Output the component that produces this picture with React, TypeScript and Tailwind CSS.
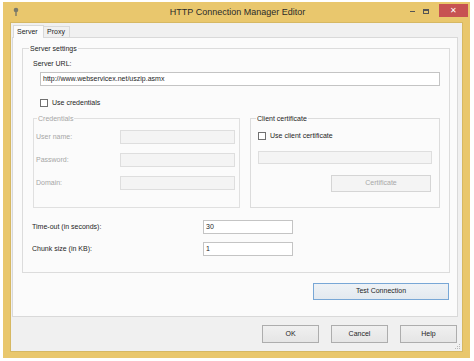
import type { FC } from "react";

const font = "font-['Liberation_Sans',Arial,sans-serif]";

const Checkbox: FC<{ label: string }> = ({ label }) => (
    <div className="flex items-center gap-[4px] h-[9px]">
        <div className="w-[8px] h-[8px] border border-[#707070] bg-white" />
        <span className="text-[7px] leading-[9px] text-[#1e1e1e]">{label}</span>
    </div>
);

const Btn: FC<{ label: string; w: string; disabled?: boolean; def?: boolean }> = ({ label, w, disabled, def }) => {
    let cls = "border-[#adadad] bg-[linear-gradient(#f0f0f0,#e5e5e5)] text-[#1e1e1e]";
    if (disabled) cls = "border-[#d5d5d5] bg-[#f4f4f4] text-[#a8a8a8]";
    if (def) cls = "border-[#78a7d6] bg-[linear-gradient(#eef2f6,#e3e9ef)] text-[#1e1e1e]";
    return (
        <div className={`${w} h-full border flex items-center justify-center text-[7px] ${cls}`}>
            {label}
        </div>
    );
};

const CredRow: FC<{ label: string }> = ({ label }) => (
    <div className="flex items-center ml-[2px]">
        <span className="w-[84px] text-[7px] text-[#a6a6a6]">{label}</span>
        <div className="w-[115px] h-[14px] border border-[#dedede] bg-[#f4f4f4]" />
    </div>
);

const App: FC = () => {
    return (
        <div className={`w-[474px] h-[361px] bg-white pt-[2px] pl-[3px] ${font}`}>
            <div className="w-[467px] h-[356px] bg-[#e9c76d] flex flex-col">

                {/* TITLE BAR */}
                <div className="h-[20px] flex items-start relative">
                    <svg className="absolute left-[10px] top-[5px]" width="6" height="10" viewBox="0 0 6 10">
                        <circle cx="3" cy="3" r="2.3" fill="#7a7a6a" />
                        <rect x="2.3" y="5" width="1.4" height="4" fill="#7a7a6a" />
                    </svg>
                    <div className="flex-1 text-center text-[9px] leading-[20px] text-[#2b2b2b] pl-[2px]">
                        HTTP Connection Manager Editor
                    </div>
                    <div className="absolute right-[2px] top-0 flex items-start">
                        <div className="w-[14px] h-[14px] flex items-center justify-center mt-[2px]">
                            <div className="w-[5px] h-[1px] bg-[#555]" />
                        </div>
                        <div className="w-[14px] h-[14px] flex items-center justify-center mt-[2px] mr-[6px]">
                            <div className="w-[6px] h-[5px] border border-[#555] border-t-2" />
                        </div>
                        <div className="w-[29px] h-[13px] mt-[2px] bg-[#c75252] flex items-center justify-center text-white text-[8px] leading-none">
                            ✕
                        </div>
                    </div>
                </div>

                {/* CLIENT AREA */}
                <div className="mx-[7px] h-[330px] bg-[#f0f0f0] border border-[#d6b863] pl-[1px] pt-[1px] relative">

                    {/* TABS */}
                    <div className="flex items-end h-[13px] ml-[1px] text-[7px] text-[#1e1e1e]">
                        <div className="w-[31px] h-[13px] bg-[#fbfbfb] border border-b-0 border-[#d9d9d9] flex items-center pl-[3px] relative top-[1px] z-10">
                            Server
                        </div>
                        <div className="w-[26px] h-[11px] bg-[#f0f0f0] border border-l-0 border-b-0 border-[#d9d9d9] flex items-center pl-[3px]">
                            Proxy
                        </div>
                    </div>

                    {/* PANEL */}
                    <div className="w-[446px] h-[280px] border border-[#d9d9d9] bg-[#fbfbfb] flex flex-col">

                        <fieldset className="ml-[9px] mt-[6px] w-[428px] border border-[#dcdcdc] flex flex-col pb-[16px]">
                            <legend className="ml-[6px] px-[1px] text-[7px] leading-[9px] text-[#1e1e1e]">Server settings</legend>

                            <div className="ml-[10px] mt-[6px] text-[7px] leading-[9px] text-[#1e1e1e]">Server URL:</div>
                            <div className="ml-[17px] mt-[4px] w-[400px] h-[14px] border border-[#c4c4c4] bg-white flex items-center pl-[2px] text-[7px] text-[#1e1e1e]">
                                http://www.webservicex.net/uszip.asmx
                            </div>

                            <div className="ml-[17px] mt-[12px]">
                                <Checkbox label="Use credentials" />
                            </div>

                            <div className="flex ml-[10px] mt-[7px] gap-[10px]">
                                <fieldset className="w-[207px] h-[94px] border border-[#e0e0e0] flex flex-col gap-[9px]">
                                    <legend className="ml-[3px] px-[1px] text-[7px] leading-[9px] text-[#a6a6a6]">Credentials</legend>
                                    <div className="mt-[7px] flex flex-col gap-[9px]">
                                        <CredRow label="User name:" />
                                        <CredRow label="Password:" />
                                        <CredRow label="Domain:" />
                                    </div>
                                </fieldset>

                                <fieldset className="w-[190px] h-[94px] border border-[#dcdcdc] flex flex-col">
                                    <legend className="ml-[5px] px-[1px] text-[7px] leading-[9px] text-[#1e1e1e]">Client certificate</legend>
                                    <div className="ml-[7px] mt-[8px]">
                                        <Checkbox label="Use client certificate" />
                                    </div>
                                    <div className="ml-[7px] mt-[11px] w-[174px] h-[13px] border border-[#dedede] bg-[#f4f4f4]" />
                                    <div className="ml-[80px] mt-[11px] h-[17px] flex">
                                        <Btn label="Certificate" w="w-[100px]" disabled />
                                    </div>
                                </fieldset>
                            </div>

                            <div className="flex items-center ml-[9px] mt-[12px]">
                                <span className="w-[171px] text-[7px] text-[#1e1e1e]">Time-out (in seconds):</span>
                                <div className="w-[90px] h-[14px] border border-[#c4c4c4] bg-white flex items-center pl-[2px] text-[7px] text-[#1e1e1e]">30</div>
                            </div>
                            <div className="flex items-center ml-[9px] mt-[8px]">
                                <span className="w-[171px] text-[7px] text-[#1e1e1e]">Chunk size (in KB):</span>
                                <div className="w-[90px] h-[14px] border border-[#c4c4c4] bg-white flex items-center pl-[2px] text-[7px] text-[#1e1e1e]">1</div>
                            </div>
                        </fieldset>

                        <div className="ml-[300px] mt-[10px] h-[17px] flex">
                            <Btn label="Test Connection" w="w-[136px]" def />
                        </div>
                    </div>

                    {/* FOOTER */}
                    <div className="flex justify-end gap-[12px] pr-[5px] mt-[8px] h-[18px]">
                        <Btn label="OK" w="w-[57px]" />
                        <Btn label="Cancel" w="w-[57px]" />
                        <Btn label="Help" w="w-[57px]" />
                    </div>

                    <svg className="absolute right-[1px] bottom-[1px]" width="6" height="6" viewBox="0 0 6 6">
                        <rect x="4" y="0" width="1" height="1" fill="#b8b8b8" />
                        <rect x="2" y="2" width="1" height="1" fill="#b8b8b8" />
                        <rect x="4" y="2" width="1" height="1" fill="#b8b8b8" />
                        <rect x="0" y="4" width="1" height="1" fill="#b8b8b8" />
                        <rect x="2" y="4" width="1" height="1" fill="#b8b8b8" />
                        <rect x="4" y="4" width="1" height="1" fill="#b8b8b8" />
                    </svg>
                </div>
            </div>
        </div>
    );
};

export default App;
